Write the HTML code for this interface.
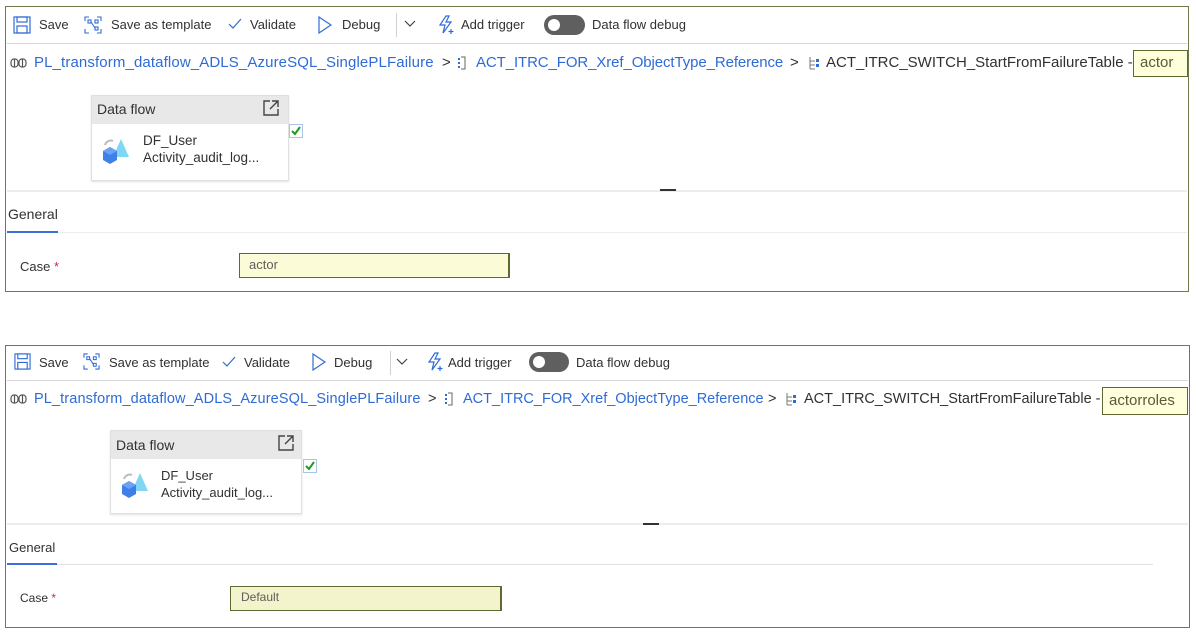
<!DOCTYPE html>
<html><head><meta charset="utf-8"><style>
*{margin:0;padding:0;box-sizing:border-box}
body{width:1196px;height:633px;background:#fff;position:relative;overflow:hidden;font-family:"Liberation Sans",sans-serif;color:#323130}
.a{position:absolute;white-space:nowrap}
.panel{position:absolute;border:1.5px solid #6e7a4c;background:#fff}
.tb{font-size:13px;color:#323130}
.bc{font-size:15px}
.link{color:#2f6bd6}
.hline{position:absolute;height:1px;background:#e1e1e1}
.card{position:absolute;border:1px solid #e0e0e0;background:#fff;box-shadow:0 1px 2px rgba(0,0,0,.12)}
.card .h{position:absolute;left:0;top:0;right:0;height:28px;background:#e8e8e8}
.chk{position:absolute;width:14px;height:14px;border:1px solid #a9c4e6;background:#fff}
.inp{position:absolute;border:1.5px solid #5e6a32;border-right-width:2px;background:#fbfbd8;font-size:13px;color:#605e5c;padding-left:9px}
.tip{position:absolute;border:1.5px solid #5e6a32;background:#ffffdc;font-size:15px;color:#5a5a3a;padding-left:6px}
</style></head><body>

<!-- PANEL 1 -->
<div class="panel" style="left:5px;top:6px;width:1184px;height:286px"></div>
<svg class="a" style="left:13px;top:16px" width="18" height="18" viewBox="0 0 18 18" fill="none" stroke="#2f6bd6" stroke-width="1.2"><rect x="1" y="1" width="16" height="16"/><rect x="4" y="1" width="10" height="5"/><rect x="4" y="10" width="10" height="7"/></svg>
<span class="a tb" style="left:39px;top:17px">Save</span>
<svg class="a" style="left:84px;top:16px" width="18" height="18" viewBox="0 0 18 18" fill="none" stroke="#2f6bd6" stroke-width="1.1"><path d="M1 5V1h4M13 1h4v4M17 13v4h-4M5 17H1v-4"/><rect x="4" y="4" width="3" height="3"/><rect x="11" y="4" width="3" height="3"/><rect x="11" y="11" width="3" height="3"/><path d="M7 6l4 6"/></svg>
<span class="a tb" style="left:111px;top:17px">Save as template</span>
<svg class="a" style="left:228px;top:18px" width="14" height="12" viewBox="0 0 14 12" fill="none" stroke="#2f6bd6" stroke-width="1.2"><path d="M1 6l4 4 8-9"/></svg>
<span class="a tb" style="left:250px;top:17px">Validate</span>
<svg class="a" style="left:318px;top:16px" width="14" height="18" viewBox="0 0 14 18" fill="none" stroke="#2f6bd6" stroke-width="1.2"><path d="M1 1l12 8-12 8z"/></svg>
<span class="a tb" style="left:342px;top:17px">Debug</span>
<div class="a" style="left:396px;top:13px;width:1px;height:24px;background:#d0d0d0"></div>
<svg class="a" style="left:404px;top:20px" width="12" height="8" viewBox="0 0 12 8" fill="none" stroke="#444" stroke-width="1.2"><path d="M1 1l5 5 5-5"/></svg>
<svg class="a" style="left:437px;top:15px" width="18" height="20" viewBox="0 0 18 20" fill="none" stroke="#2f6bd6" stroke-width="1.2"><path d="M9 1L3 10h5l-2 8 8-11H9l3-6z"/><path d="M14 14v5M11.5 16.5h5"/></svg>
<span class="a tb" style="left:461px;top:17px">Add trigger</span>
<div class="a" style="left:544px;top:15px;width:41px;height:20px;border-radius:10px;background:#5f5f5f"></div>
<div class="a" style="left:548px;top:19px;width:12px;height:12px;border-radius:6px;background:#fff"></div>
<span class="a tb" style="left:592px;top:17px">Data flow debug</span>
<div class="hline" style="left:7px;top:43px;width:1180px;background:#d8d8d8"></div>

<svg class="a" style="left:10px;top:58px" width="18" height="10" viewBox="0 0 18 10" fill="none" stroke="#555" stroke-width="1.2"><rect x="1" y="1" width="7" height="8" rx="3"/><rect x="9" y="1" width="7" height="8" rx="3"/><path d="M4.5 1v8M12.5 1v8"/></svg>
<span class="a bc link" style="left:34px;top:54px;letter-spacing:0.12px">PL_transform_dataflow_ADLS_AzureSQL_SinglePLFailure</span>
<span class="a bc" style="left:442px;top:54px">&gt;</span>
<svg class="a" style="left:457px;top:56px" width="10" height="14" viewBox="0 0 10 14"><path d="M4 1h4v12H4" stroke="#666" fill="none"/><rect x="1" y="2" width="2" height="2" fill="#2f6bd6"/><rect x="1" y="6" width="2" height="2" fill="#2f6bd6"/><rect x="1" y="10" width="2" height="2" fill="#2f6bd6"/></svg>
<span class="a bc link" style="left:476px;top:54px;letter-spacing:-0.1px">ACT_ITRC_FOR_Xref_ObjectType_Reference</span>
<span class="a bc" style="left:790px;top:54px">&gt;</span>
<svg class="a" style="left:808px;top:56px" width="12" height="14" viewBox="0 0 12 14"><path d="M2 1v12M2 5h5M2 9h5M2 13h5" stroke="#777" fill="none"/><rect x="8" y="3" width="3" height="3" fill="#2f6bd6"/><rect x="8" y="8" width="3" height="3" fill="#2f6bd6"/></svg>
<span class="a bc" style="left:826px;top:54px">ACT_ITRC_SWITCH_StartFromFailureTable -</span>
<div class="tip" style="left:1133px;top:50px;width:55px;height:27px;line-height:24px">actor</div>

<div class="card" style="left:91px;top:95px;width:198px;height:86px"><div class="h"></div></div>
<span class="a" style="left:97px;top:101px;font-size:14px;color:#323130">Data flow</span>
<svg class="a" style="left:262px;top:99px" width="18" height="18" viewBox="0 0 18 18" fill="none" stroke="#444" stroke-width="1.4"><path d="M8 2H2v14h14v-6"/><path d="M10 2h6v6M16 2L8 10"/></svg>
<svg class="a" style="left:101px;top:135px" width="32" height="30" viewBox="0 0 32 30"><path d="M4 10a6 6 0 0 1 8-4" stroke="#bbb" stroke-width="2" fill="none"/><path d="M20 4l-8 18h16z" fill="#7fd7f5"/><path d="M2 16l7-4 7 4v9l-7 4-7-4z" fill="#3f7fe8"/><path d="M2 16l7 4 7-4-7-4z" fill="#6aa2f5"/></svg>
<span class="a" style="left:143px;top:133px;font-size:13.5px">DF_User</span>
<span class="a" style="left:143px;top:150px;font-size:13.5px">Activity_audit_log...</span>
<div class="chk" style="left:289px;top:124px"></div>
<svg class="a" style="left:291px;top:126px" width="10" height="10" viewBox="0 0 10 10"><path d="M1 5l3 3 5-7" stroke="#1e9a1e" stroke-width="2" fill="none"/></svg>

<div class="hline" style="left:7px;top:190px;width:1180px;height:2px;background:#ececec"></div>
<div class="a" style="left:660px;top:189px;width:16px;height:2px;background:#333"></div>
<span class="a" style="left:8px;top:206px;font-size:14px">General</span>
<div class="hline" style="left:7px;top:232px;width:1180px;background:#ececec"></div>
<div class="a" style="left:7px;top:231px;width:51px;height:2px;background:#3b6fd6"></div>
<span class="a" style="left:20px;top:259px;font-size:13px">Case <span style="color:#c4314b">*</span></span>
<div class="inp" style="left:239px;top:253px;width:271px;height:25px;line-height:22px">actor</div>

<!-- PANEL 2 -->
<div class="panel" style="left:5px;top:345px;width:1185px;height:283px"></div>
<svg class="a" style="left:14px;top:353px" width="17" height="17" viewBox="0 0 18 18" fill="none" stroke="#2f6bd6" stroke-width="1.2"><rect x="1" y="1" width="16" height="16"/><rect x="4" y="1" width="10" height="5"/><rect x="4" y="10" width="10" height="7"/></svg>
<span class="a tb" style="left:39px;top:355px">Save</span>
<svg class="a" style="left:83px;top:353px" width="17" height="17" viewBox="0 0 18 18" fill="none" stroke="#2f6bd6" stroke-width="1.1"><path d="M1 5V1h4M13 1h4v4M17 13v4h-4M5 17H1v-4"/><rect x="4" y="4" width="3" height="3"/><rect x="11" y="4" width="3" height="3"/><rect x="11" y="11" width="3" height="3"/><path d="M7 6l4 6"/></svg>
<span class="a tb" style="left:109px;top:355px">Save as template</span>
<svg class="a" style="left:222px;top:356px" width="14" height="12" viewBox="0 0 14 12" fill="none" stroke="#2f6bd6" stroke-width="1.2"><path d="M1 6l4 4 8-9"/></svg>
<span class="a tb" style="left:244px;top:355px">Validate</span>
<svg class="a" style="left:312px;top:353px" width="14" height="18" viewBox="0 0 14 18" fill="none" stroke="#2f6bd6" stroke-width="1.2"><path d="M1 1l12 8-12 8z"/></svg>
<span class="a tb" style="left:334px;top:355px">Debug</span>
<div class="a" style="left:390px;top:351px;width:1px;height:24px;background:#d0d0d0"></div>
<svg class="a" style="left:396px;top:358px" width="12" height="8" viewBox="0 0 12 8" fill="none" stroke="#444" stroke-width="1.2"><path d="M1 1l5 5 5-5"/></svg>
<svg class="a" style="left:426px;top:352px" width="18" height="20" viewBox="0 0 18 20" fill="none" stroke="#2f6bd6" stroke-width="1.2"><path d="M9 1L3 10h5l-2 8 8-11H9l3-6z"/><path d="M14 14v5M11.5 16.5h5"/></svg>
<span class="a tb" style="left:448px;top:355px">Add trigger</span>
<div class="a" style="left:529px;top:352px;width:40px;height:20px;border-radius:10px;background:#5f5f5f"></div>
<div class="a" style="left:533px;top:356px;width:12px;height:12px;border-radius:6px;background:#fff"></div>
<span class="a tb" style="left:576px;top:355px">Data flow debug</span>
<div class="hline" style="left:7px;top:380px;width:1181px;background:#d8d8d8"></div>

<svg class="a" style="left:10px;top:394px" width="18" height="10" viewBox="0 0 18 10" fill="none" stroke="#555" stroke-width="1.2"><rect x="1" y="1" width="7" height="8" rx="3"/><rect x="9" y="1" width="7" height="8" rx="3"/><path d="M4.5 1v8M12.5 1v8"/></svg>
<span class="a bc link" style="left:34px;top:391px;font-size:14.5px;letter-spacing:0.12px">PL_transform_dataflow_ADLS_AzureSQL_SinglePLFailure</span>
<span class="a bc" style="left:428px;top:391px;font-size:14.5px">&gt;</span>
<svg class="a" style="left:444px;top:392px" width="10" height="14" viewBox="0 0 10 14"><path d="M4 1h4v12H4" stroke="#666" fill="none"/><rect x="1" y="2" width="2" height="2" fill="#2f6bd6"/><rect x="1" y="6" width="2" height="2" fill="#2f6bd6"/><rect x="1" y="10" width="2" height="2" fill="#2f6bd6"/></svg>
<span class="a bc link" style="left:463px;top:391px;font-size:14.5px">ACT_ITRC_FOR_Xref_ObjectType_Reference</span>
<span class="a bc" style="left:768px;top:391px;font-size:14.5px">&gt;</span>
<svg class="a" style="left:785px;top:392px" width="12" height="14" viewBox="0 0 12 14"><path d="M2 1v12M2 5h5M2 9h5M2 13h5" stroke="#777" fill="none"/><rect x="8" y="3" width="3" height="3" fill="#2f6bd6"/><rect x="8" y="8" width="3" height="3" fill="#2f6bd6"/></svg>
<span class="a bc" style="left:804px;top:391px;font-size:14.5px">ACT_ITRC_SWITCH_StartFromFailureTable -</span>
<div class="tip" style="left:1102px;top:387px;width:86px;height:28px;line-height:25px">actorroles</div>

<div class="card" style="left:110px;top:430px;width:192px;height:84px"><div class="h"></div></div>
<span class="a" style="left:116px;top:437px;font-size:14px">Data flow</span>
<svg class="a" style="left:277px;top:434px" width="18" height="18" viewBox="0 0 18 18" fill="none" stroke="#444" stroke-width="1.4"><path d="M8 2H2v14h14v-6"/><path d="M10 2h6v6M16 2L8 10"/></svg>
<svg class="a" style="left:120px;top:469px" width="32" height="30" viewBox="0 0 32 30"><path d="M4 10a6 6 0 0 1 8-4" stroke="#bbb" stroke-width="2" fill="none"/><path d="M20 4l-8 18h16z" fill="#7fd7f5"/><path d="M2 16l7-4 7 4v9l-7 4-7-4z" fill="#3f7fe8"/><path d="M2 16l7 4 7-4-7-4z" fill="#6aa2f5"/></svg>
<span class="a" style="left:161px;top:468px;font-size:13px">DF_User</span>
<span class="a" style="left:161px;top:485px;font-size:13px">Activity_audit_log...</span>
<div class="chk" style="left:303px;top:459px"></div>
<svg class="a" style="left:305px;top:461px" width="10" height="10" viewBox="0 0 10 10"><path d="M1 5l3 3 5-7" stroke="#1e9a1e" stroke-width="2" fill="none"/></svg>

<div class="hline" style="left:7px;top:523px;width:1181px;height:2px;background:#ececec"></div>
<div class="a" style="left:643px;top:523px;width:16px;height:2px;background:#333"></div>
<span class="a" style="left:9px;top:540px;font-size:13px">General</span>
<div class="hline" style="left:7px;top:564px;width:1146px;background:#e0e0e0"></div>
<div class="a" style="left:7px;top:563px;width:50px;height:2px;background:#3b6fd6"></div>
<span class="a" style="left:20px;top:591px;font-size:12px">Case <span style="color:#c4314b">*</span></span>
<div class="inp" style="left:230px;top:586px;width:272px;height:25px;line-height:20px;background:#f3f3cc;font-size:12px;padding-left:10px">Default</div>
</body></html>
